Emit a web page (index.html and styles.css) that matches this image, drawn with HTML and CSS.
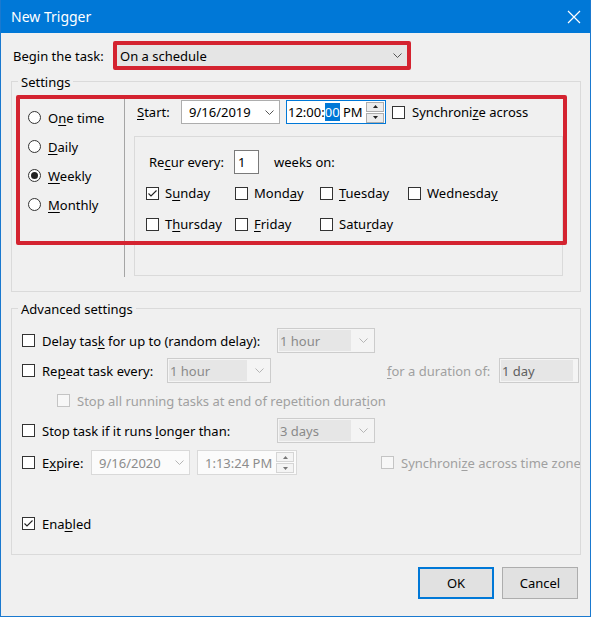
FILE: index.html
```html
<!DOCTYPE html>
<html lang="en">
<head>
    <meta charset="UTF-8">
    <title>New Trigger</title>
    <link rel="stylesheet" href="styles.css">
</head>
<body>

<div class="window">
    <!-- Title bar -->
    <div class="titlebar">
        <span class="title">New Trigger</span>
        <svg class="close" width="14" height="14" viewBox="0 0 14 14">
            <path d="M1 1 L13 13 M13 1 L1 13" stroke="#fff" stroke-width="1.2" fill="none"/>
        </svg>
    </div>

    <div class="dialog">
        <div class="begin-row">
            <span class="begin-label">Be<u>g</u>in the task:</span>
            <div class="combo combo-begin">
                <span class="value">On a schedule</span>
                <svg class="chevron" width="9" height="5" viewBox="0 0 9 5"><polyline points="0.5,0.5 4.5,4.5 8.5,0.5" fill="none" stroke="#555"/></svg>
            </div>
        </div>

        <!-- Settings -->
        <div class="group group-settings">
            <div class="group-title">Settings</div>
            <div class="settings-body">
                <div class="schedule-types">
                    <label class="radio-row"><span class="radio"></span><span>O<u>n</u>e time</span></label>
                    <label class="radio-row"><span class="radio"></span><span><u>D</u>aily</span></label>
                    <label class="radio-row"><span class="radio checked"></span><span><u>W</u>eekly</span></label>
                    <label class="radio-row"><span class="radio"></span><span><u>M</u>onthly</span></label>
                </div>
                <div class="schedule-detail">
                    <div class="start-row">
                        <span class="start-label"><u>S</u>tart:</span>
                        <div class="field date-field">
                            <span class="value">9/16/2019</span>
                            <svg class="chevron" width="9" height="5" viewBox="0 0 9 5"><polyline points="0.5,0.5 4.5,4.5 8.5,0.5" fill="none" stroke="#555"/></svg>
                        </div>
                        <div class="field time-field focused">
                            <span class="value">12:00:<span class="selected">00</span> PM</span>
                            <div class="spin">
                                <span class="spin-btn"><svg width="5" height="3" viewBox="0 0 5 3"><polygon points="2.5,0 5,3 0,3" fill="#222"/></svg></span>
                                <span class="spin-btn"><svg width="5" height="3" viewBox="0 0 5 3"><polygon points="0,0 5,0 2.5,3" fill="#222"/></svg></span>
                            </div>
                        </div>
                        <span class="check sync-check"></span>
                        <span class="check-label">Synchroni<u>z</u>e across</span>
                    </div>

                    <div class="recur-panel">
                        <div class="recur-row">
                            <span class="recur-label">Re<u>c</u>ur every:</span>
                            <div class="field recur-input"><span class="value">1</span></div>
                            <span class="weeks-label">weeks on:</span>
                        </div>
                        <div class="day-row">
                            <label class="day day-1"><span class="check checked"></span><span>S<u>u</u>nday</span></label>
                            <label class="day day-2"><span class="check"></span><span>Mond<u>a</u>y</span></label>
                            <label class="day day-3"><span class="check"></span><span><u>T</u>uesday</span></label>
                            <label class="day"><span class="check"></span><span>Wednesda<u>y</u></span></label>
                        </div>
                        <div class="day-row">
                            <label class="day day-1"><span class="check"></span><span>T<u>h</u>ursday</span></label>
                            <label class="day day-2"><span class="check"></span><span><u>F</u>riday</span></label>
                            <label class="day day-3"><span class="check"></span><span>Satu<u>r</u>day</span></label>
                        </div>
                    </div>
                </div>
            </div>
            <div class="highlight"></div>
        </div>

        <!-- Advanced settings -->
        <div class="group group-advanced">
            <div class="group-title">Advanced settings</div>
            <div class="advanced-body">
                <div class="adv-row">
                    <label class="adv-check w-delay"><span class="check"></span><span>Delay tas<u>k</u> for up to (random delay):</span></label>
                    <div class="combo combo-off w-combo">
                        <span class="value">1 hour</span>
                        <svg class="chevron" width="9" height="5" viewBox="0 0 9 5"><polyline points="0.5,0.5 4.5,4.5 8.5,0.5" fill="none" stroke="#b5b5b5"/></svg>
                    </div>
                </div>
                <div class="adv-row">
                    <label class="adv-check w-repeat"><span class="check"></span><span>Re<u>p</u>eat task every:</span></label>
                    <div class="combo combo-off w-repeat-combo">
                        <span class="value">1 hour</span>
                        <svg class="chevron" width="9" height="5" viewBox="0 0 9 5"><polyline points="0.5,0.5 4.5,4.5 8.5,0.5" fill="none" stroke="#b5b5b5"/></svg>
                    </div>
                    <span class="muted duration-label"><u>f</u>or a duration of:</span>
                    <div class="combo combo-off duration-box">
                        <span class="value dark">1 day</span>
                    </div>
                </div>
                <div class="adv-row indent">
                    <label class="adv-check"><span class="check off"></span><span class="muted">Stop all running tasks at end of repetition durat<u>i</u>on</span></label>
                </div>
                <div class="adv-row">
                    <label class="adv-check w-delay"><span class="check"></span><span>Stop task if it runs <u>l</u>onger than:</span></label>
                    <div class="combo combo-off w-combo">
                        <span class="value">3 days</span>
                        <svg class="chevron" width="9" height="5" viewBox="0 0 9 5"><polyline points="0.5,0.5 4.5,4.5 8.5,0.5" fill="none" stroke="#b5b5b5"/></svg>
                    </div>
                </div>
                <div class="adv-row expire-row">
                    <label class="adv-check w-expire"><span class="check"></span><span>E<u>x</u>pire:</span></label>
                    <div class="field field-off expire-date">
                        <span class="value">9/16/2020</span>
                        <svg class="chevron" width="9" height="5" viewBox="0 0 9 5"><polyline points="0.5,0.5 4.5,4.5 8.5,0.5" fill="none" stroke="#b5b5b5"/></svg>
                    </div>
                    <div class="field field-off expire-time">
                        <span class="value">1:13:24 PM</span>
                        <div class="spin spin-off">
                            <span class="spin-btn"><svg width="5" height="3" viewBox="0 0 5 3"><polygon points="2.5,0 5,3 0,3" fill="#777"/></svg></span>
                            <span class="spin-btn"><svg width="5" height="3" viewBox="0 0 5 3"><polygon points="0,0 5,0 2.5,3" fill="#777"/></svg></span>
                        </div>
                    </div>
                    <span class="check off zone-check"></span>
                    <span class="check-label muted">Synchroni<u>z</u>e across time zones</span>
                </div>
                <div class="adv-row enabled-row">
                    <label class="adv-check"><span class="check checked"></span><span>Ena<u>b</u>led</span></label>
                </div>
            </div>
        </div>

        <div class="buttons">
            <button class="btn btn-default">OK</button>
            <button class="btn">Cancel</button>
        </div>
    </div>
</div>

</body>
</html>
```

FILE: styles.css
```css
* {
    margin: 0;
    padding: 0;
    box-sizing: border-box;
}

body {
    width: 591px;
    height: 617px;
    font-family: "Noto Sans", sans-serif;
    font-size: 13px;
    color: #000;
    background: #f0f0f0;
}

u {
    text-underline-offset: 2px;
}

.window {
    width: 591px;
    height: 617px;
    border: 1px solid #1a79cf;
    border-top: none;
    background: #f0f0f0;
    overflow: hidden;
}

/* Title bar */
.titlebar {
    height: 33px;
    margin: 0 -1px;
    padding: 0 10px 0 11px;
    background: #0078d7;
    color: #fff;
    display: flex;
    align-items: center;
    justify-content: space-between;
}

.title {
    font-size: 14px;
}

.dialog {
    padding: 8px 9px 0 10px;
}

/* Begin the task */
.begin-row {
    height: 29px;
    display: flex;
    align-items: center;
}

.begin-label {
    width: 100px;
    margin-left: 2px;
}

.combo {
    display: flex;
    flex: none;
    align-items: center;
    height: 25px;
}

.combo-begin {
    width: 298px;
    height: 29px;
    border: 4px solid #d42330;
    border-radius: 2px;
    background: #e5e5e5;
    padding: 0 5px 0 3px;
}

.combo .value {
    flex: 1;
}

/* Group boxes */
.group {
    position: relative;
    border: 1px solid #dadada;
}

.group-title {
    width: fit-content;
    margin: -9px 0 0 6px;
    padding: 0 3px;
    line-height: 18px;
    background: #f0f0f0;
}

.group-settings {
    height: 211px;
    margin-top: 11px;
}

.settings-body {
    display: flex;
    height: 200px;
}

.schedule-types {
    width: 113px;
    height: 180px;
    margin-top: 6px;
    padding: 6px 0 0 16px;
    border-right: 1px solid #a5a5a5;
}

.radio-row {
    height: 29px;
    display: flex;
    align-items: center;
    gap: 7px;
}

.radio {
    width: 13px;
    height: 13px;
    border: 1px solid #333;
    border-radius: 50%;
    background: #fff;
    display: flex;
    align-items: center;
    justify-content: center;
}

.radio.checked::after {
    content: "";
    width: 7px;
    height: 7px;
    border-radius: 50%;
    background: #222;
}

.schedule-detail {
    flex: 1;
    padding: 9px 0 0 9px;
}

.start-row {
    height: 24px;
    display: flex;
    align-items: center;
}

.start-label {
    width: 44px;
    margin-left: 3px;
}

/* Edit fields and pickers */
.field {
    height: 24px;
    flex: none;
    display: flex;
    align-items: center;
    border: 1px solid #adadad;
    background: #fff;
}

.date-field {
    width: 99px;
    padding: 0 5px 0 7px;
}

.field .value {
    flex: 1;
}

.time-field {
    width: 100px;
    margin-left: 6px;
    padding: 0 1px 0 1px;
}

.time-field.focused {
    border-color: #0078d7;
}

.selected {
    background: #0078d7;
    color: #fff;
}

.spin {
    width: 18px;
    height: 21px;
    display: flex;
    flex-direction: column;
    gap: 1px;
}

.spin-btn {
    flex: 1;
    display: flex;
    align-items: center;
    justify-content: center;
    border: 1px solid #adadad;
    background: #ececec;
}

.spin-off .spin-btn {
    border-color: #d5d5d5;
    background: #f4f4f4;
}

/* Checkboxes */
.check {
    width: 13px;
    height: 13px;
    flex: none;
    border: 1px solid #333;
    background: #fff;
}

.check.checked {
    background: #fff url("data:image/svg+xml,%3Csvg xmlns='http://www.w3.org/2000/svg' width='11' height='11' viewBox='0 0 11 11'%3E%3Cpolyline points='1.5,5.5 4,8 9.5,2.5' fill='none' stroke='%23222' stroke-width='1.1'/%3E%3C/svg%3E") no-repeat center;
}

.check.off {
    border-color: #c4c4c4;
    background: #f7f7f7;
}

.sync-check {
    margin-left: 6px;
}

.check-label {
    margin-left: 7px;
    white-space: nowrap;
}

/* Recurrence panel */
.recur-panel {
    width: 429px;
    height: 140px;
    margin-top: 12px;
    padding: 13px 0 0 11px;
    border: 1px solid #dadada;
    display: flex;
    flex-direction: column;
    gap: 7px;
}

.recur-row,
.day-row {
    height: 24px;
    display: flex;
    align-items: center;
}

.recur-label {
    width: 85px;
    margin-left: 3px;
}

.recur-input {
    width: 25px;
    padding-left: 3px;
    border-color: #7a7a7a;
}

.weeks-label {
    margin-left: 15px;
}

.day {
    display: flex;
    align-items: center;
    gap: 6px;
}

.day-1 { width: 89px; }
.day-2 { width: 85px; }
.day-3 { width: 88px; }

/* Red outline drawn over the schedule options */
.highlight {
    position: absolute;
    left: 4px;
    top: 13px;
    width: 551px;
    height: 150px;
    border: 4px solid #d42330;
    border-radius: 2px;
    pointer-events: none;
}

/* Advanced settings */
.group-advanced {
    height: 247px;
    margin-top: 16px;
}

.advanced-body {
    padding: 10px 0 0 10px;
    display: flex;
    flex-direction: column;
    gap: 5px;
    overflow: hidden;
}

.adv-row {
    height: 25px;
    flex: none;
    display: flex;
    align-items: center;
    white-space: nowrap;
}

.adv-check {
    display: flex;
    flex: none;
    align-items: center;
    gap: 7px;
}

.w-delay { width: 255px; }
.w-repeat { width: 145px; }
.w-expire { width: 69px; }

.indent {
    padding-left: 35px;
}

.muted {
    color: #a0a0a0;
}

.combo-off {
    border: 1px solid #cccccc;
    background: #f4f4f4;
    padding: 1px 6px 1px 1px;
}

.combo-off .value {
    height: 100%;
    display: flex;
    align-items: center;
    padding-left: 1px;
    margin-right: 8px;
    background: #e6e6e6;
    color: #8a8a8a;
}

.combo-off .value.dark {
    color: #606060;
    margin-right: 0;
}

.w-combo { width: 98px; }
.w-repeat-combo { width: 104px; }

.duration-label {
    flex: none;
    margin-left: 116px;
    width: 112px;
}

.duration-box {
    width: 80px;
    padding-right: 5px;
}

.expire-row {
    margin-top: 2px;
}

.field-off {
    height: 25px;
    border-color: #d9d9d9;
    background: #fbfbfb;
    color: #8c8c8c;
}

.expire-date {
    width: 99px;
    padding: 0 5px 0 7px;
}

.expire-time {
    width: 100px;
    margin-left: 7px;
    padding: 0 2px 0 7px;
}

.zone-check {
    margin-left: 84px;
}

.enabled-row {
    margin-top: 31px;
}

/* Dialog buttons */
.buttons {
    display: flex;
    justify-content: flex-end;
    gap: 8px;
    margin-top: 12px;
    padding-right: 3px;
}

.btn {
    width: 76px;
    height: 32px;
    border: 1px solid #adadad;
    background: #e1e1e1;
    font-family: "Noto Sans", sans-serif;
    font-size: 13px;
    color: #000;
}

.btn-default {
    border: 2px solid #0078d7;
}
```
